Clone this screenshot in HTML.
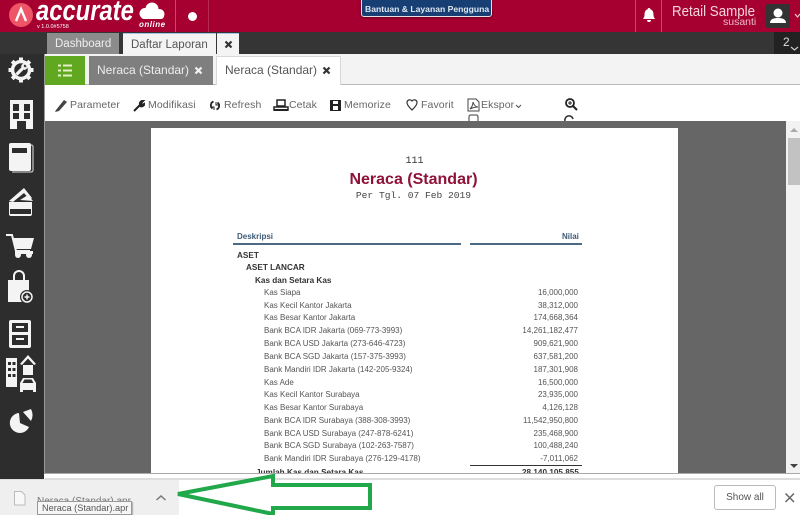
<!DOCTYPE html>
<html><head><meta charset="utf-8"><style>
html,body{margin:0;padding:0;width:800px;height:515px;overflow:hidden;background:#fff}
body{position:relative;font-family:"Liberation Sans",sans-serif}
.a{position:absolute;white-space:nowrap}
.tb{position:absolute;top:98px;font-size:10.500px;color:#666;line-height:14px;letter-spacing:.1px}
.r{position:absolute;left:0;width:800px;font-size:8px;line-height:12px;color:#555;white-space:nowrap}
.r span{position:absolute;top:0}
.r .v{right:222px;text-align:right}
</style></head><body>
<!-- header -->
<div class="a" style="left:0;top:0;width:800px;height:32px;background:#a60030"></div>
<div class="a" style="left:175px;top:0;width:1px;height:32px;background:#bd4a68"></div>
<div class="a" style="left:208px;top:0;width:1px;height:32px;background:#b52c52"></div>
<div class="a" style="left:635px;top:0;width:1px;height:32px;background:#bd4a68"></div>
<div class="a" style="left:661px;top:0;width:1px;height:32px;background:#bd4a68"></div>
<svg class="a" style="left:0;top:0" width="175" height="32">
<circle cx="21" cy="15" r="12" fill="#ee5566"/><path d="M16 21 L21 9 L26 21" fill="none" stroke="#fff" stroke-width="2.400"/>
<g fill="#fff"><circle cx="145" cy="13.500" r="5.500"/><circle cx="152" cy="9" r="6.500"/><circle cx="159.500" cy="14" r="5"/><rect x="141" y="13" width="23" height="6" rx="3"/></g>
</svg>
<div class="a" style="left:36px;top:-5px;font:italic bold 29px 'Liberation Sans',sans-serif;color:#fff;line-height:32px;transform-origin:0 0;transform:scaleX(.82)">accurate</div>
<div class="a" style="left:139px;top:20px;font:italic bold 8px 'Liberation Sans',sans-serif;color:#fff;line-height:10px;letter-spacing:.5px">online</div>
<div class="a" style="left:37px;top:24px;font-size:5.500px;color:#fff;line-height:7px">v 1.0.0#5758</div>
<div class="a" style="left:188px;top:12px;width:9px;height:9px;border-radius:5px;background:#fff"></div>
<div class="a" style="left:361px;top:-4px;width:131px;height:21px;background:#173f73;border:1px solid #e8dfe6;border-radius:3px;box-shadow:0 1px 2px #0006;box-sizing:border-box"></div>
<div class="a" style="left:365px;top:3px;font-size:8.600px;font-weight:bold;color:#dfe8f2;line-height:12px">Bantuan &amp; Layanan Pengguna</div>
<svg class="a" style="left:641px;top:7px" width="16" height="16"><path d="M8 1 a1.300 1.300 0 0 1 1.300 1.400 C12 3 12.500 5.500 12.500 8 C12.500 10 13.500 11 14 12 H2 C2.500 11 3.500 10 3.500 8 C3.500 5.500 4 3 6.700 2.400 A1.300 1.300 0 0 1 8 1z M6 13 h4 a2 2 0 0 1 -4 0z" fill="#fff"/></svg>
<div class="a" style="left:672px;top:4px;font-size:14.500px;color:#f4d7de;line-height:16px;transform-origin:0 0;transform:scaleX(.92)">Retail Sample</div>
<div class="a" style="left:723px;top:16px;font-size:10.500px;color:#eebcc8;line-height:12px">susanti</div>
<div class="a" style="left:766px;top:4px;width:24px;height:24px;background:#333;border-radius:2px"></div>
<svg class="a" style="left:766px;top:4px" width="34" height="24"><circle cx="12" cy="9" r="4.500" fill="#fff"/><path d="M4 19 c0-4 4-5 8-5 s8 1 8 5z" fill="#fff"/><path d="M29 10 l2.500 3 2.500-3" fill="none" stroke="#ecc" stroke-width="1.200"/></svg>
<!-- dark band -->
<div class="a" style="left:0;top:32px;width:800px;height:22px;background:#353535"></div>
<div class="a" style="left:774px;top:32px;width:26px;height:22px;background:#222"></div>
<div class="a" style="left:783px;top:35px;font-size:12px;color:#ddd;line-height:14px">2</div>
<svg class="a" style="left:790px;top:46px" width="10" height="6"><path d="M1 1 l3.500 3 3.500-3" fill="none" stroke="#ccc" stroke-width="1.200"/></svg>
<div class="a" style="left:47px;top:33px;width:72px;height:21px;background:#8c8c8c"></div>
<div class="a" style="left:55px;top:37px;font-size:11.500px;color:#eee;line-height:14px">Dashboard</div>
<div class="a" style="left:123px;top:33px;width:93px;height:21px;background:#f4f4f4;border-top:1px solid #a9c4e0;box-sizing:border-box"></div>
<div class="a" style="left:131px;top:38px;font-size:11.500px;color:#555;line-height:14px">Daftar Laporan</div>
<div class="a" style="left:217px;top:33px;width:22px;height:21px;background:#f4f4f4;border-top:1px solid #a9c4e0;box-sizing:border-box"></div>
<svg class="a" style="left:224px;top:40px" width="10" height="10"><path d="M1.500 1.500 l6 6 M7.500 1.500 l-6 6" stroke="#333" stroke-width="2.200"/></svg>
<!-- sidebar -->
<div class="a" style="left:0;top:54px;width:44px;height:425px;background:#2d2d2d"></div>
<div class="a" style="left:44px;top:54px;width:1px;height:420px;background:#999"></div>
<svg class="a" style="left:0;top:54px" width="44" height="425" fill="#f4f4f4">
<!-- gear -->
<g transform="translate(21 16)"><circle r="8.500" fill="none" stroke="#f4f4f4" stroke-width="3.500"/>
<g stroke="#f4f4f4" stroke-width="4"><path d="M0-12.500V-9M0 12.500V9M-12.500 0H-9M12.500 0H9M-8.800-8.800L-6.500-6.500M8.800 8.800L6.500 6.500M-8.800 8.800L-6.500 6.500M8.800-8.800L6.500-6.500"/></g>
<path d="M-4.500 4.500 L2-2" stroke="#f4f4f4" stroke-width="3.200"/><path d="M0-3.500 a3.800 3.800 0 0 1 4.500-3 l-2 2.500 1.500 1.500 2.500-2 a3.800 3.800 0 0 1-3 4.500z" fill="#f4f4f4"/></g>
<!-- building -->
<path fill-rule="evenodd" d="M10 46 H33 V75 H26 V67 H17 V75 H10z M13 50 v7 h6 v-7z M24 50 v7 h6 v-7z M13 59 v6 h6 v-6z M24 59 v6 h6 v-6z"/>
<!-- book -->
<path d="M13 91 h18 q2 0 2 2 v23 q0 2 -2 2 h-19" fill="none" stroke="#bbb" stroke-width="1.300"/>
<path fill-rule="evenodd" d="M9 91 Q9 89 11 89 H29 Q31 89 31 91 V115 Q31 117 29 117 H11 Q9 117 9 115z M12 94 v5 h15 v-5z"/>
<!-- wallet -->
<path d="M9 147 L24 134 L32 144 L30 146 L24 139 L13 148z M20 146 L28 141 L33 147z"/>
<path fill-rule="evenodd" d="M9 148 H32 V160 Q32 162 30 162 H11 Q9 162 9 160z M10 155 v5 h21 v-5z"/>
<!-- cart -->
<path d="M6 181 H12 L16 197 H30" fill="none" stroke="#f4f4f4" stroke-width="2"/><path d="M13 184 H34 L31 195 H16z"/><circle cx="18" cy="201" r="3"/><circle cx="29" cy="201" r="3"/><rect x="15" y="197" width="18" height="3"/>
<!-- bag -->
<path d="M14 227 v-5 a5 5 0 0 1 10 0 v5" fill="none" stroke="#f4f4f4" stroke-width="2"/><path d="M8 226 H29 V248 H8z"/><circle cx="27" cy="243" r="7" fill="#2d2d2d"/><circle cx="27" cy="243" r="5" fill="none" stroke="#f4f4f4" stroke-width="1.500"/><path d="M24.500 243 h5 M27 240.500 v5" stroke="#f4f4f4" stroke-width="1.500"/>
<!-- cabinet -->
<path fill-rule="evenodd" d="M9 268 Q9 266 11 266 H29 Q31 266 31 268 V292 Q31 294 29 294 H11 Q9 294 9 292z M12 269 V278 H28 V269z M12 281 V291 H28 V281z"/><rect x="16" y="272" width="8" height="2"/><rect x="16" y="284" width="8" height="2"/>
<!-- assets -->
<path fill-rule="evenodd" d="M6 304 H17 V333 H6z M8 308 v3 h3 v-3z M12.500 308 v3 h3 v-3z M8 314 v3 h3 v-3z M12.500 314 v3 h3 v-3z M8 320 v3 h3 v-3z M12.500 320 v3 h3 v-3z"/>
<path d="M20 310 L28 301 L36 310 L34 311 L28 304.500 L22 311z M23 311 H33 V321 H23z"/>
<path fill-rule="evenodd" d="M23 324 H33 L36 329 V338 H33 V336 H23 V338 H20 V329z M24.500 325.500 L22.500 329 H33.500 L31.500 325.500z"/>
<!-- pie -->
<path d="M20 369 L29 373 A10 10 0 1 1 19 359z"/><path d="M23 358 L31 355 A13 13 0 0 1 31 367z"/>
</svg>
<!-- subtab row -->
<div class="a" style="left:45px;top:54px;width:755px;height:31px;background:#f3f3f3"></div>
<div class="a" style="left:45px;top:84px;width:755px;height:1px;background:#bbb"></div>
<div class="a" style="left:45px;top:56px;width:40px;height:29px;background:#5fa81f"></div>
<svg class="a" style="left:58px;top:64px" width="16" height="14"><path d="M0 1.500h3M0 6.500h3M0 11.500h3M5 1.500h9M5 6.500h9M5 11.500h9" stroke="#e4f0c8" stroke-width="2"/></svg>
<div class="a" style="left:89px;top:56px;width:124px;height:29px;background:#7f7f7f"></div>
<div class="a" style="left:97px;top:63px;font-size:12px;color:#eee;line-height:15px">Neraca (Standar)</div>
<svg class="a" style="left:194px;top:66px" width="10" height="10"><path d="M1.500 1.500 l6 6 M7.500 1.500 l-6 6" stroke="#f2f2f2" stroke-width="2.200"/></svg>
<div class="a" style="left:216px;top:56px;width:125px;height:29px;background:#fff;border:1px solid #d8d8d8;border-bottom:0;box-sizing:border-box"></div>
<div class="a" style="left:225px;top:63px;font-size:12px;color:#555;line-height:15px">Neraca (Standar)</div>
<svg class="a" style="left:322px;top:66px" width="10" height="10"><path d="M1.500 1.500 l6 6 M7.500 1.500 l-6 6" stroke="#333" stroke-width="2.200"/></svg>
<!-- toolbar -->
<div class="tb" style="left:70px">Parameter</div>
<div class="tb" style="left:148px">Modifikasi</div>
<div class="tb" style="left:224px">Refresh</div>
<div class="tb" style="left:289px">Cetak</div>
<div class="tb" style="left:344px">Memorize</div>
<div class="tb" style="left:421px">Favorit</div>
<div class="tb" style="left:481px">Ekspor</div>
<svg class="a" style="left:50px;top:96px" width="540" height="26">
<path d="M6 14 L14 4 L17 6 L9 15 L5 16z" fill="#444"/>
<path d="M84 15 L91 8 M90 9 a3 3 0 0 1 2-4 l1 0 -2 2 1 2 2-1 0 1 a3 3 0 0 1-4 1" stroke="#222" stroke-width="2" fill="#222"/>
<path d="M163.500 5.500 a4 4 0 0 0 -1 7 M166.500 13.500 a4 4 0 0 0 1-7" fill="none" stroke="#222" stroke-width="1.800"/><path d="M161 11l3 0 0 3M169 9l-3 0 0-3" fill="none" stroke="#222" stroke-width="1"/>
<path d="M227 4 h8 v6 h-8z M224 11 h14 v3 h-14z" fill="none" stroke="#222" stroke-width="1.500"/><path d="M224 13h14v2h-14z" fill="#222"/>
<path fill-rule="evenodd" d="M280 4 H291 V15 H280z M283 5 v3 h5 v-3z M283 10 v4 h5 v-4z" fill="#222"/>
<path d="M357 6 a2.800 2.800 0 0 1 5-1 a2.800 2.800 0 0 1 5 1 c.5 3 -3 6 -5 8 c-2-2 -5.500-5 -5-8z" fill="none" stroke="#333" stroke-width="1.200"/>
<path d="M418 3 h8 l3 3 v9 h-11z M420 13 c2-2 3-5 3-7 c1 3 3 5 5 5 c-3 0-6 1-8 2" fill="none" stroke="#444" stroke-width="1"/>
<path d="M466 9 l2.500 2.500 2.500-2.500" fill="none" stroke="#555" stroke-width="1.100"/>
<circle cx="520" cy="7" r="4" fill="none" stroke="#222" stroke-width="1.800"/><path d="M523 10 l4 4" stroke="#222" stroke-width="2"/><path d="M518 7h4M520 5v4" stroke="#222"/>
<path d="M419 25 v-4 q0-2 2-2 h5 q2 0 2 2 v4" fill="none" stroke="#666" stroke-width="1.300"/>
<path d="M515 25 a4 4 0 0 1 8-2" fill="none" stroke="#333" stroke-width="1.600"/>
</svg>
<!-- report area -->
<div class="a" style="left:45px;top:121px;width:741px;height:358px;background:#666"></div>
<div class="a" style="left:786px;top:121px;width:14px;height:353px;background:#f2f2f2"></div>
<div class="a" style="left:788px;top:138px;width:12px;height:47px;background:#c2c2c2"></div>
<svg class="a" style="left:789px;top:126px" width="10" height="8"><path d="M1 6 l4-4 4 4z" fill="#aaa"/></svg>
<svg class="a" style="left:789px;top:462px" width="10" height="8"><path d="M1 2 l4 4 4-4z" fill="#444"/></svg>
<div class="a" style="left:151px;top:128px;width:527px;height:346px;background:#fff;overflow:hidden"></div>
<div class="a" style="left:151px;top:156px;width:527px;text-align:center;font:10px 'Liberation Mono',monospace;color:#333;line-height:12px">111</div>
<div class="a" style="left:150px;top:170px;width:527px;text-align:center;font-size:16px;font-weight:bold;color:#8f1239;line-height:19px">Neraca (Standar)</div>
<div class="a" style="left:150px;top:190px;width:527px;text-align:center;font:9.600px 'Liberation Mono',monospace;color:#444;line-height:12px">Per Tgl. 07 Feb 2019</div>
<div class="a" style="left:237px;top:232px;font-size:8px;font-weight:bold;color:#3d5a76;line-height:10px">Deskripsi</div>
<div class="a" style="left:562px;top:232px;font-size:8px;font-weight:bold;color:#3d5a76;line-height:10px">Nilai</div>
<div class="a" style="left:233px;top:243px;width:228px;height:1.500px;background:#4d6a84"></div>
<div class="a" style="left:470px;top:243px;width:112px;height:1.500px;background:#4d6a84"></div>
<div class="a" style="left:237px;top:250px;font-size:8.200px;font-weight:bold;color:#333;line-height:11px">ASET</div>
<div class="a" style="left:246px;top:262px;font-size:8.200px;font-weight:bold;color:#333;line-height:11px">ASET LANCAR</div>
<div class="a" style="left:255px;top:275px;font-size:8.200px;font-weight:bold;color:#333;line-height:11px">Kas dan Setara Kas</div>
<div class="r" style="top:287px"><span style="left:264px">Kas Siapa</span><span class="v">16,000,000</span></div>
<div class="r" style="top:300px"><span style="left:264px">Kas Kecil Kantor Jakarta</span><span class="v">38,312,000</span></div>
<div class="r" style="top:312px"><span style="left:264px">Kas Besar Kantor Jakarta</span><span class="v">174,668,364</span></div>
<div class="r" style="top:325px"><span style="left:264px">Bank BCA IDR Jakarta (069-773-3993)</span><span class="v">14,261,182,477</span></div>
<div class="r" style="top:338px"><span style="left:264px">Bank BCA USD Jakarta (273-646-4723)</span><span class="v">909,621,900</span></div>
<div class="r" style="top:351px"><span style="left:264px">Bank BCA SGD Jakarta (157-375-3993)</span><span class="v">637,581,200</span></div>
<div class="r" style="top:364px"><span style="left:264px">Bank Mandiri IDR Jakarta (142-205-9324)</span><span class="v">187,301,908</span></div>
<div class="r" style="top:377px"><span style="left:264px">Kas Ade</span><span class="v">16,500,000</span></div>
<div class="r" style="top:389px"><span style="left:264px">Kas Kecil Kantor Surabaya</span><span class="v">23,935,000</span></div>
<div class="r" style="top:402px"><span style="left:264px">Kas Besar Kantor Surabaya</span><span class="v">4,126,128</span></div>
<div class="r" style="top:415px"><span style="left:264px">Bank BCA IDR Surabaya (388-308-3993)</span><span class="v">11,542,950,800</span></div>
<div class="r" style="top:428px"><span style="left:264px">Bank BCA USD Surabaya (247-878-6241)</span><span class="v">235,468,900</span></div>
<div class="r" style="top:440px"><span style="left:264px">Bank BCA SGD Surabaya (102-263-7587)</span><span class="v">100,488,240</span></div>
<div class="r" style="top:453px"><span style="left:264px">Bank Mandiri IDR Surabaya (276-129-4178)</span><span class="v">-7,011,062</span></div>
<div class="a" style="left:470px;top:465px;width:112px;height:1px;background:#333"></div>
<div class="a" style="left:256px;top:468px;font-size:8.200px;font-weight:bold;color:#333;line-height:10px">Jumlah Kas dan Setara Kas</div>
<div class="a" style="left:522px;top:468px;font-size:8.200px;font-weight:bold;color:#333;line-height:10px">28,140,105,855</div>
<!-- download shelf -->
<div class="a" style="left:45px;top:474px;width:755px;height:5px;background:#fff"></div>
<div class="a" style="left:0;top:480px;width:800px;height:35px;background:#fff"></div>
<div class="a" style="left:45px;top:473px;width:755px;height:1px;background:#aaa"></div>
<div class="a" style="left:45px;top:478px;width:755px;height:2px;background:#ddd"></div>
<div class="a" style="left:0;top:479px;width:45px;height:1px;background:#ddd"></div>
<div class="a" style="left:0;top:480px;width:179px;height:35px;background:#efefef"></div>
<svg class="a" style="left:14px;top:491px" width="12" height="15"><path d="M.5 .5 H7.500 L11 4 V14 H.5z" fill="#f8f8f8" stroke="#bbb"/></svg>
<div class="a" style="left:37px;top:495px;font-size:10px;color:#777;line-height:14px">Neraca (Standar).apr</div>
<svg class="a" style="left:155px;top:494px" width="12" height="8"><path d="M1.500 6 L6 2 L10.500 6" fill="none" stroke="#777" stroke-width="1.500"/></svg>
<div class="a" style="left:37px;top:501px;width:95px;height:14px;background:#f6f6f6;border:1px solid #999;box-sizing:border-box;box-shadow:1px 1px 1px #aaa"></div>
<div class="a" style="left:42px;top:502px;font-size:9.200px;color:#555;line-height:13px">Neraca (Standar).apr</div>
<svg class="a" style="left:170px;top:470px" width="210" height="45"><path d="M8 24 L103 6 V15 H200 V38 H103 V44z" fill="#fff" stroke="#21a84a" stroke-width="4"/></svg>
<div class="a" style="left:714px;top:485px;width:62px;height:25px;border:1px solid #bbb;border-radius:3px;box-sizing:border-box;text-align:center;font-size:10px;color:#555;line-height:23px">Show all</div>
<svg class="a" style="left:784px;top:492px" width="12" height="12"><path d="M1.500 1.500 L10 10 M10 1.500 L1.500 10" stroke="#666" stroke-width="1.500"/></svg>
</body></html>
